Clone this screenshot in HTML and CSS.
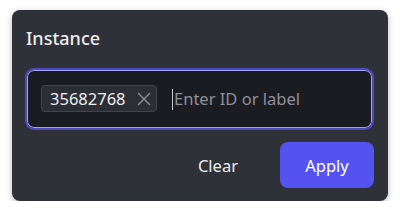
FILE: index.html
```html
<!DOCTYPE html>
<html>
<head>
<meta charset="utf-8">
<link rel="stylesheet" href="styles.css">
</head>
<body>
<div class="panel">
  <div class="title">Instance</div>
  <div class="field">
    <span class="chip">35682768
      <svg class="chip-x" width="14" height="14" viewBox="0 0 14 14"><path d="M1 1 L13 13 M13 1 L1 13" stroke="#8d8f97" stroke-width="1.4" fill="none"/></svg>
    </span>
    <span class="caret"></span>
    <span class="placeholder">Enter ID or label</span>
  </div>
  <div class="actions">
    <button class="btn btn-clear">Clear</button>
    <button class="btn btn-apply">Apply</button>
  </div>
</div>
</body>
</html>
```
FILE: styles.css
```css
html, body {
  margin: 0;
  padding: 0;
  background: #ffffff;
}
body {
  font-family: "Noto Sans", "Open Sans", sans-serif;
}
.panel {
  box-sizing: border-box;
  margin: 10px 0 0 12px;
  width: 376px;
  height: 191px;
  background: #2f3139;
  border-radius: 8px;
  box-shadow: 0 2px 6px rgba(0, 0, 0, 0.28);
  padding: 15px 14px 13px 13px;
  display: flex;
  flex-direction: column;
}
.title {
  color: #ececee;
  font-size: 18px;
  font-weight: 500;
  line-height: 26px;
  padding-left: 1px;
}
.field {
  box-sizing: border-box;
  margin-top: 17px;
  height: 62px;
  background: #1b1c21;
  border: 2px solid #4e4bc0;
  box-shadow: inset 0 0 0 1px #a29ff4;
  border-radius: 9px;
  display: flex;
  align-items: center;
  padding: 0 0 0 14px;
}
.chip {
  box-sizing: border-box;
  height: 27px;
  display: inline-flex;
  align-items: center;
  gap: 11px;
  padding: 0 5px 0 8px;
  background: #2c2e35;
  border: 1px solid #42444c;
  border-radius: 4px;
  color: #ececee;
  font-size: 16.5px;
  margin-top: -1px;
}
.chip-x {
  display: block;
}
.caret {
  width: 1.5px;
  height: 21px;
  background: #c8c9cf;
  margin-left: 15px;
}
.placeholder {
  color: #8e9098;
  font-size: 16.5px;
  margin-left: 1px;
  margin-top: -1px;
}
.actions {
  margin-top: 12px;
  display: flex;
  justify-content: flex-end;
  gap: 22px;
}
.btn {
  font-family: "Noto Sans", "Open Sans", sans-serif;
  font-size: 16.5px;
  border: none;
  height: 46px;
  border-radius: 8px;
  cursor: pointer;
}
.btn-clear {
  background: transparent;
  color: #ececee;
  padding: 0 20px;
}
.btn-apply {
  background: #5553ef;
  color: #ffffff;
  width: 94px;
}
```
